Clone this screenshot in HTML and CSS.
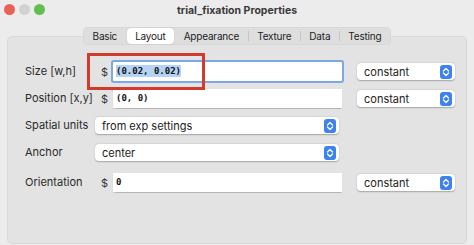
FILE: index.html
```html
<!DOCTYPE html>
<html>
<head>
<meta charset="utf-8">
<link rel="stylesheet" href="styles.css">
</head>
<body>
<div class="window">
  <div class="titlebar">
    <div class="lights">
      <span class="light red"></span>
      <span class="light gray"></span>
      <span class="light green"></span>
    </div>
    <div class="title">trial_fixation Properties</div>
  </div>
  <div class="content">
    <div class="tabs">
      <span class="tab">Basic</span>
      <span class="tab active">Layout</span>
      <span class="tab">Appearance</span>
      <span class="sep"></span>
      <span class="tab">Texture</span>
      <span class="sep"></span>
      <span class="tab">Data</span>
      <span class="sep"></span>
      <span class="tab">Testing</span>
    </div>
    <div class="panel">
      <div class="form">
        <div class="label">Size [w,h]</div>
        <div class="dollar">$</div>
        <div class="field focused"><span class="sel">(0.02, 0.02)</span></div>
        <div class="popup small"><span>constant</span><span class="stepper"><svg width="8" height="10" viewBox="0 0 8 10"><path d="M1.5 4 L4 1.5 L6.5 4 M1.5 6 L4 8.5 L6.5 6" fill="none" stroke="#fff" stroke-width="1.3" stroke-linecap="round" stroke-linejoin="round"/></svg></span></div>

        <div class="label">Position [x,y]</div>
        <div class="dollar">$</div>
        <div class="field">(0, 0)</div>
        <div class="popup small"><span>constant</span><span class="stepper"><svg width="8" height="10" viewBox="0 0 8 10"><path d="M1.5 4 L4 1.5 L6.5 4 M1.5 6 L4 8.5 L6.5 6" fill="none" stroke="#fff" stroke-width="1.3" stroke-linecap="round" stroke-linejoin="round"/></svg></span></div>

        <div class="label">Spatial units</div>
        <div class="popup wide"><span>from exp settings</span><span class="stepper"><svg width="8" height="10" viewBox="0 0 8 10"><path d="M1.5 4 L4 1.5 L6.5 4 M1.5 6 L4 8.5 L6.5 6" fill="none" stroke="#fff" stroke-width="1.3" stroke-linecap="round" stroke-linejoin="round"/></svg></span></div>
        <div class="empty"></div>

        <div class="label">Anchor</div>
        <div class="popup wide"><span>center</span><span class="stepper"><svg width="8" height="10" viewBox="0 0 8 10"><path d="M1.5 4 L4 1.5 L6.5 4 M1.5 6 L4 8.5 L6.5 6" fill="none" stroke="#fff" stroke-width="1.3" stroke-linecap="round" stroke-linejoin="round"/></svg></span></div>
        <div class="empty"></div>

        <div class="label last">Orientation</div>
        <div class="dollar last">$</div>
        <div class="field last">0</div>
        <div class="popup small last"><span>constant</span><span class="stepper"><svg width="8" height="10" viewBox="0 0 8 10"><path d="M1.5 4 L4 1.5 L6.5 4 M1.5 6 L4 8.5 L6.5 6" fill="none" stroke="#fff" stroke-width="1.3" stroke-linecap="round" stroke-linejoin="round"/></svg></span></div>
      </div>
      <div class="highlight"></div>
    </div>
  </div>
</div>
</body>
</html>
```
FILE: styles.css
```css
html, body {
  margin: 0;
  padding: 0;
}
body {
  width: 474px;
  height: 245px;
  overflow: hidden;
  background: #ececec;
  font-family: "Inter", "Liberation Sans", sans-serif;
  color: #222;
}
.window {
  width: 474px;
  height: 245px;
  display: flex;
  flex-direction: column;
  background: #ececec;
}
.titlebar {
  position: relative;
  height: 19px;
  display: flex;
  align-items: center;
  justify-content: center;
}
.lights {
  position: absolute;
  left: 4px;
  top: 4px;
  display: flex;
  gap: 4px;
}
.light {
  width: 11px;
  height: 11px;
  border-radius: 50%;
  display: block;
}
.red { background: #ec5f57; }
.gray { background: #d2d2d2; }
.green { background: #5fc04f; }
.title {
  font-size: 10.5px;
  font-weight: 700;
  color: #3a3a3a;
  padding-top: 1px;
}
.content {
  flex: 1;
  display: flex;
  flex-direction: column;
  align-items: center;
  padding: 8px 7px 1px 7px;
}
.tabs {
  position: relative;
  z-index: 2;
  display: flex;
  align-items: center;
  height: 18px;
  padding: 0 1px;
  background: #dedede;
  border-radius: 5px;
  box-shadow: inset 0 0 0 0.5px #d2d2d2;
  font-size: 10px;
  letter-spacing: -0.2px;
  color: #222;
}
.tab {
  padding: 0 8.5px;
  line-height: 16px;
  border-radius: 4px;
}
.tab.active {
  background: #fff;
  box-shadow: 0 0 1px rgba(0,0,0,0.25);
  padding: 0 8.5px;
  margin: 0 1px;
}
.sep {
  width: 1px;
  height: 10px;
  background: #c6c6c6;
}
.panel {
  position: relative;
  align-self: stretch;
  flex: 1;
  margin-top: -9px;
  background: #e3e3e3;
  border: 1px solid #d9d9d9;
  border-radius: 5px;
  padding: 25px 0 0 17px;
}
.form {
  display: grid;
  grid-template-columns: 70px 18px 229px 113px;
  column-gap: 0;
  row-gap: 8px;
  align-items: center;
  font-size: 11px;
}
.form > .popup.small {
  margin-left: 15px;
}
.form > .last {
  margin-top: 3px;
}
.label {
  color: #2a2a2a;
  height: 19px;
  line-height: 19px;
}
.dollar {
  font-size: 11px;
  color: #333;
  padding-left: 6px;
}
.field {
  height: 19px;
  line-height: 19px;
  background: #fff;
  box-shadow: 0 0.5px 1px rgba(0,0,0,0.2);
  font-family: "DejaVu Sans Mono", monospace;
  font-weight: 700;
  font-size: 9px;
  padding-left: 3px;
  color: #111;
}
.field.focused {
  box-shadow: 0 0 0 2px #7ea8e3;
  border-radius: 1px;
}
.sel {
  background: #b4d3f5;
  padding: 1px 0;
}
.popup {
  height: 17px;
  display: flex;
  align-items: center;
  justify-content: space-between;
  background: #fff;
  border-radius: 4px;
  box-shadow: 0 0.5px 1.5px rgba(0,0,0,0.28);
  padding: 0 3px 0 7px;
  color: #222;
}
.popup.wide {
  grid-column: 2 / 4;
  margin-right: 3px;
}
.stepper {
  width: 12px;
  height: 14px;
  border-radius: 3px;
  background: #3d83f0;
  display: flex;
  align-items: center;
  justify-content: center;
}
.highlight {
  position: absolute;
  left: 79px;
  top: 16px;
  width: 112px;
  height: 31px;
  border: 3px solid #d33a2e;
}
.empty { height: 1px; }
```
